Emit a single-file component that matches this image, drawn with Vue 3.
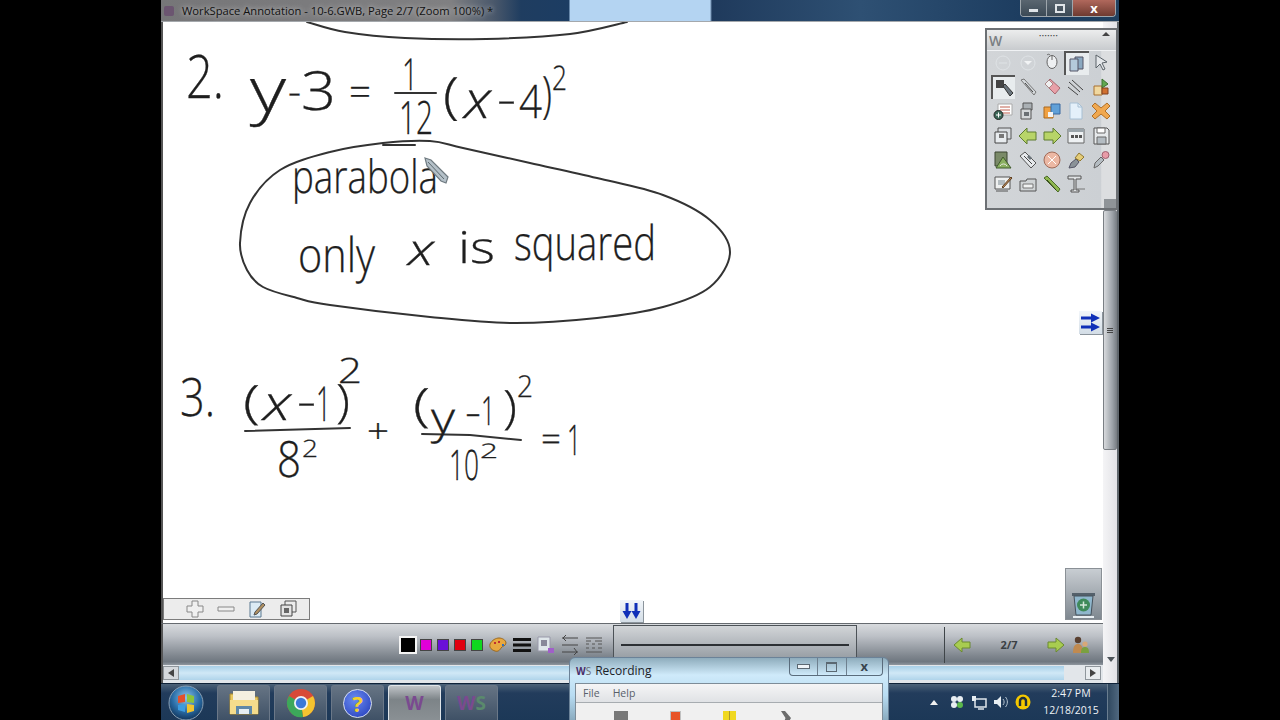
<template>
  <div class="screen">
    <div class="desktop">
      <div class="titlebar">
        <span class="title-icon"></span>
        <span class="title-text">WorkSpace Annotation - 10-6.GWB, Page 2/7  (Zoom 100%) *</span>
        <span class="title-glow"></span>
        <div class="win-btns">
          <span class="win-btn"><i class="glyph-min"></i></span>
          <span class="win-btn"><i class="glyph-max"></i></span>
          <span class="win-btn close">x</span>
        </div>
      </div>

      <div class="work">
        <div class="left-col">
          <div class="board">
            <svg class="ink" viewBox="161 22 942 601" width="942" height="601">
              <path v-for="(d, i) in inkPaths" :key="i" :d="d" class="stroke" />
              <text
                v-for="(t, i) in tokens"
                :key="'t' + i"
                :x="t.x"
                :y="t.y"
                :font-size="t.size"
                :textLength="t.w"
                :class="{ slant: t.slant }"
                lengthAdjust="spacingAndGlyphs"
                class="hand"
              >{{ t.t }}</text>
              <!-- pen cursor -->
              <path d="M425 158 L431 160 L448 177 L446 183 L441 181 L427 166 Z" fill="#b4c0c8" stroke="#6f7a80" stroke-width="1.2" />
              <path d="M428 162 L444 179" stroke="#5d6a70" stroke-width="1" fill="none" />
            </svg>

            <div class="page-strip">
              <svg v-for="(icon, i) in stripIcons" :key="i" viewBox="0 0 20 20" width="20" height="20">
                <path v-for="(p, j) in icon" :key="j" :d="p[0]" :fill="p[1]" :stroke="p[2]" />
              </svg>
            </div>

            <div class="arrow-tab down">
              <svg viewBox="0 0 23 22" width="23" height="22">
                <path d="M7 3v10M16 3v10" stroke="#1030b8" stroke-width="3" />
                <path d="M2.5 11h9L7 19zM11.5 11h9L16 19z" fill="#1030b8" />
              </svg>
            </div>

            <div class="arrow-tab right">
              <svg viewBox="0 0 23 23" width="23" height="23">
                <path d="M2 7h12M2 16h12" stroke="#1030b8" stroke-width="3" />
                <path d="M12 2.5l9 4.5-9 4.5zM12 11.5l9 4.5-9 4.5z" fill="#1030b8" />
              </svg>
            </div>

            <div class="trash">
              <svg viewBox="0 0 37 32" width="37" height="32">
                <path d="M7 4h23v3H7z" fill="#54606a" />
                <path d="M9 7h19l-2 19H11z" fill="#8fb6cc" stroke="#46525c" />
                <circle cx="18.5" cy="16" r="6.5" fill="#3f8a5a" />
                <path d="M15 16h7M18.5 12.5v7" stroke="#d4e6da" stroke-width="1.5" />
                <path d="M8 27h21v2H8z" fill="#e8eef2" />
              </svg>
            </div>
          </div>

          <div class="toolbar">
            <span class="swatch current"></span>
            <span v-for="c in swatches" :key="c" class="swatch" :style="{ background: c }"></span>
            <svg v-for="(icon, i) in penIcons" :key="i" class="tool-icon" viewBox="0 0 20 20" width="20" height="20">
              <path v-for="(p, j) in icon" :key="j" :d="p[0]" :fill="p[1]" :stroke="p[2]" />
            </svg>
            <div class="slider-panel"><span class="slider-line"></span></div>
            <span class="separator"></span>
            <svg class="nav-icon" viewBox="0 0 20 20" width="20" height="20">
              <path d="M2 10l8-7v4h8v6h-8v4z" fill="#a8cc50" stroke="#6a8a30" />
            </svg>
            <span class="page-no">2/7</span>
            <svg class="nav-icon" viewBox="0 0 20 20" width="20" height="20">
              <path d="M18 10l-8-7v4H2v6h8v4z" fill="#a8cc50" stroke="#6a8a30" />
            </svg>
            <svg class="nav-icon" viewBox="0 0 20 20" width="20" height="20">
              <circle cx="7" cy="5" r="3.2" fill="#5a4030" />
              <path d="M2 18c0-7 2-9 5-9s5 2 5 9z" fill="#c08a50" />
              <circle cx="14" cy="9" r="2.6" fill="#d8a878" />
              <path d="M10 18c0-4 1-6 4-6s4 2 4 6z" fill="#7aa040" />
            </svg>
          </div>

          <div class="hscroll">
            <span class="h-btn"><i class="tri-left"></i></span>
            <span class="h-thumb"></span>
            <span class="h-btn end"><i class="tri-right"></i></span>
          </div>
        </div>

        <div class="vscroll">
          <span class="v-up"></span>
          <span class="v-thumb"><i></i><i></i><i></i></span>
          <span class="v-track"></span>
          <span class="v-down"></span>
        </div>
      </div>

      <div class="taskbar">
        <div class="orb">
          <svg viewBox="0 0 36 36" width="36" height="36">
            <defs>
              <radialGradient id="orbFill" cx="50%" cy="35%" r="65%">
                <stop offset="0" stop-color="#8fc4e8" />
                <stop offset="0.6" stop-color="#2a6ea8" />
                <stop offset="1" stop-color="#12365c" />
              </radialGradient>
            </defs>
            <circle cx="18" cy="18" r="17" fill="url(#orbFill)" stroke="#8aa0b4" />
            <path d="M10 11l7-2v8l-7 1z" fill="#e4502c" />
            <path d="M19 9l7 2v7l-7-1z" fill="#8cc43c" />
            <path d="M10 20l7-1v8l-7-2z" fill="#3c9ce0" />
            <path d="M19 19l7 1v6l-7 2z" fill="#f0c430" />
          </svg>
        </div>
        <div class="task-btn">
          <svg viewBox="0 0 32 30" width="32" height="30">
            <path d="M2 6h12l3 3h13v17H2z" fill="#e8c860" stroke="#a88a30" />
            <path d="M5 3h22v9H5z" fill="#f4f0e0" />
            <path d="M2 12h28v14H2z" fill="#f4dc8c" />
            <path d="M8 18h16v8H8z" fill="#5e88a8" />
            <path d="M11 21h10v5H11z" fill="#e6eef2" />
          </svg>
        </div>
        <div class="task-btn">
          <svg viewBox="0 0 30 30" width="30" height="30">
            <circle cx="15" cy="15" r="14" fill="#d84a38" />
            <path d="M15 15L27 8a14 14 0 0 1-10 21z" fill="#f4c430" />
            <path d="M15 15l2 14A14 14 0 0 1 3 8z" fill="#3ca85a" />
            <circle cx="15" cy="15" r="7" fill="#eef2f6" />
            <circle cx="15" cy="15" r="5.2" fill="#3c78d8" />
          </svg>
        </div>
        <div class="task-btn">
          <span class="help-ball">?</span>
        </div>
        <div class="task-btn active"><span class="app-w">W</span></div>
        <div class="task-btn"><span class="app-w">W</span><span class="app-s">S</span></div>

        <div class="tray">
          <span class="tray-up"></span>
          <svg viewBox="0 0 16 16" width="16" height="16">
            <circle cx="5" cy="5" r="3" fill="#e8eef2" /><circle cx="11" cy="5" r="3" fill="#e8eef2" />
            <circle cx="5" cy="11" r="3" fill="#e8eef2" /><circle cx="11" cy="11" r="3" fill="#5cb84c" />
          </svg>
          <svg viewBox="0 0 16 16" width="16" height="16">
            <path d="M1 2h4v5H1z" fill="#e8eef2" />
            <path d="M4 5h11v8H4z" fill="none" stroke="#dfe6ec" stroke-width="1.5" />
            <path d="M7 15h6" stroke="#dfe6ec" stroke-width="1.5" />
          </svg>
          <svg viewBox="0 0 16 16" width="16" height="16">
            <path d="M1 6h3l4-4v12l-4-4H1z" fill="#e8eef2" />
            <path d="M10 5c1.5 2 1.5 4 0 6M12.5 3c2.5 3 2.5 7 0 10" stroke="#b8c6d2" fill="none" />
          </svg>
          <svg viewBox="0 0 16 16" width="16" height="16">
            <circle cx="8" cy="8" r="7.5" fill="#f4c800" />
            <path d="M5 12V7a3 3 0 0 1 6 0v5" stroke="#20303c" stroke-width="2.4" fill="none" />
          </svg>
          <div class="clock">
            <div>2:47 PM</div>
            <div>12/18/2015</div>
          </div>
          <span class="show-desktop"></span>
        </div>
      </div>

      <!-- floating tool palette -->
      <div class="palette">
        <div class="palette-head">
          <span class="palette-w">W</span>
          <span class="palette-dots">•••••••</span>
          <span class="palette-tri"></span>
        </div>
        <div class="palette-grid">
          <span
            v-for="(icon, i) in paletteIcons"
            :key="i"
            class="palette-cell"
            :class="{ selected: i === 3 || i === 5 }"
          >
            <svg viewBox="0 0 20 20" width="20" height="20">
              <path v-for="(p, j) in icon" :key="j" :d="p[0]" :fill="p[1]" :stroke="p[2]" />
            </svg>
          </span>
        </div>
        <span class="palette-handle"></span>
      </div>

      <!-- recording window -->
      <div class="rec-window">
        <div class="rec-title">
          <span class="rec-logo"><b>W</b>S</span>
          <span class="rec-name">Recording</span>
          <div class="rec-btns">
            <span><i class="rec-min"></i></span>
            <span><i class="rec-max"></i></span>
            <span class="rec-x">x</span>
          </div>
        </div>
        <div class="rec-body">
          <div class="rec-menu"><span>File</span><span>Help</span></div>
          <div class="rec-tools">
            <span class="rec-stop"></span>
            <span class="rec-record"></span>
            <span class="rec-pause"></span>
            <span class="rec-pointer"></span>
          </div>
        </div>
      </div>
    </div>
  </div>
</template>

<script setup>
// catmull-rom through hand picked points, the board strokes are wobbly
const smooth = (pts, closed = false) => {
  const n = pts.length
  const at = (i) => (closed ? pts[(i + n) % n] : pts[Math.max(0, Math.min(n - 1, i))])
  let d = `M${pts[0][0]} ${pts[0][1]}`
  const last = closed ? n : n - 1
  for (let i = 0; i < last; i++) {
    const [p0, p1, p2, p3] = [at(i - 1), at(i), at(i + 1), at(i + 2)]
    const c1 = [p1[0] + (p2[0] - p0[0]) / 6, p1[1] + (p2[1] - p0[1]) / 6]
    const c2 = [p2[0] - (p3[0] - p1[0]) / 6, p2[1] - (p3[1] - p1[1]) / 6]
    d += `C${c1[0]} ${c1[1]} ${c2[0]} ${c2[1]} ${p2[0]} ${p2[1]}`
  }
  return d
}

const inkPaths = [
  smooth([[307, 22], [345, 32], [405, 38], [486, 39], [570, 34], [627, 22]]),
  smooth(
    [[383, 143], [430, 141], [463, 148], [530, 163], [597, 178], [663, 195], [710, 220], [730, 252], [710, 287],
      [663, 307], [597, 318], [513, 323], [430, 317], [330, 305], [297, 298], [263, 287], [247, 270], [240, 243], [250, 203], [280, 170], [330, 152]],
    true
  ),
  'M383 145H415',
  'M395 93H436',
  'M245 431L350 428',
  'M422 434L470 435L521 440',
]

const tokens = [
  { t: '2.', x: 186, y: 98, w: 38, size: 60 },
  { t: 'y', x: 250, y: 112, w: 36, size: 62 },
  { t: '-', x: 288, y: 106, w: 13, size: 42 },
  { t: '3', x: 301, y: 110, w: 35, size: 54 },
  { t: '=', x: 349, y: 106, w: 22, size: 40 },
  { t: '1', x: 402, y: 90, w: 16, size: 44 },
  { t: '12', x: 399, y: 134, w: 34, size: 46 },
  { t: '(', x: 443, y: 113, w: 16, size: 50 },
  { t: 'x', x: 464, y: 118, w: 27, size: 52, slant: true },
  { t: '-', x: 497, y: 114, w: 19, size: 42 },
  { t: '4', x: 519, y: 118, w: 23, size: 46 },
  { t: ')', x: 542, y: 112, w: 10, size: 50 },
  { t: '2', x: 552, y: 90, w: 15, size: 34 },

  { t: 'parabola', x: 292, y: 193, w: 146, size: 46 },
  { t: 'only', x: 298, y: 272, w: 77, size: 48 },
  { t: 'x', x: 408, y: 265, w: 26, size: 44, slant: true },
  { t: 'is', x: 458, y: 263, w: 37, size: 44 },
  { t: 'squared', x: 514, y: 260, w: 142, size: 48 },

  { t: '3.', x: 180, y: 416, w: 35, size: 53 },
  { t: '(', x: 243, y: 418, w: 17, size: 46 },
  { t: 'x', x: 263, y: 420, w: 28, size: 48, slant: true },
  { t: '-', x: 297, y: 416, w: 19, size: 42 },
  { t: '1', x: 316, y: 421, w: 15, size: 48 },
  { t: ')', x: 336, y: 417, w: 14, size: 46 },
  { t: '2', x: 338, y: 383, w: 24, size: 35 },
  { t: '8', x: 277, y: 477, w: 24, size: 50 },
  { t: '2', x: 302, y: 457, w: 16, size: 24 },
  { t: '+', x: 367, y: 443, w: 22, size: 34 },
  { t: '(', x: 413, y: 421, w: 17, size: 46 },
  { t: 'y', x: 431, y: 433, w: 24, size: 44 },
  { t: '-', x: 465, y: 426, w: 16, size: 40 },
  { t: '1', x: 481, y: 425, w: 14, size: 40 },
  { t: ')', x: 503, y: 423, w: 14, size: 46 },
  { t: '2', x: 517, y: 397, w: 16, size: 30 },
  { t: '10', x: 449, y: 480, w: 30, size: 42 },
  { t: '2', x: 480, y: 458, w: 18, size: 20 },
  { t: '=', x: 541, y: 451, w: 20, size: 34 },
  { t: '1', x: 567, y: 455, w: 14, size: 42 },
]

const swatches = ['#e000d8', '#6a10d8', '#e00010', '#10d820']

const stripIcons = [
  [['M7 2h6v5h5v6h-5v5H7v-5H2V7h5z', '#f0f0f0', '#888']],
  [['M2 8h16v4H2z', '#f0f0f0', '#888']],
  [['M3 3h11v15H3z', '#dcebf4', '#5b7890'], ['M8 13l8-9 2 2-8 9-3 1z', '#b09060', '#555']],
  [['M7 2h11v11H7z', 'none', '#555'], ['M3 6h11v11H3z', '#e4e4e4', '#444'], ['M6 9h5v5H6z', '#666', 'none']],
]

const penIcons = [
  [['M2 9c2-4 6-6 9-6s7 2 7 5-4 3-5 5-3 4-6 3-6-3-5-7z', '#e8a840', '#9a6820'], ['M6 7h2v2H6zM10 6h2v2h-2z', '#c03030', 'none'], ['M14 9h2v2h-2z', '#3070c0', 'none']],
  [['M1 3h18v3H1zM1 8.5h18v3H1zM1 14h18v3H1z', '#111', 'none']],
  [['M2 2h12v14H2z', '#dfe6ea', '#99a'], ['M5 5h6v6H5z', '#889', 'none'], ['M12 13h6v5h-6z', '#a060c8', 'none']],
  [['M2 3h16M2 10h16M2 17h16', 'none', '#444'], ['M6 6L3 3l3-3M14 13l3 4-3 3', 'none', '#444']],
  [['M2 3h16M2 9h3M8 9h3M14 9h4M2 13h3M8 13h3M14 13h4M2 17h16M2 6h5M11 6h7', 'none', '#555']],
]

const paletteIcons = [
  [['M3 10a7 7 0 1 0 14 0a7 7 0 1 0-14 0M6 10h8', 'none', '#dfe3e6']],
  [['M3 10a7 7 0 1 0 14 0a7 7 0 1 0-14 0', 'none', '#dfe3e6'], ['M6 8h8l-4 4z', '#f2f4f5', 'none']],
  [['M5 9a5 6.5 0 1 0 10 0a5 6.5 0 1 0-10 0', '#eef0f2', '#666'], ['M10 2.5V7M8 2c-1-1-2-1-3 0', 'none', '#666']],
  [['M8 3h8v12H8z', '#8aa8c0', '#556'], ['M3 5h8v12H3z', '#b4cadb', '#556']],
  [['M5 2l11 7-5 1 3 6-2 1-3-6-4 4z', '#e4e7ea', '#5a6268']],

  [['M2 2h8v8H2z', '#444', 'none'], ['M9 8l2-2 8 9-3 3z', '#6c767e', '#333']],
  [['M3 3l3-1 12 13-2 3z', '#d6dadd', '#777'], ['M7 6l8 9', 'none', '#444']],
  [['M3 7l5-5 10 9-5 6z', '#e8a0a8', '#a86870'], ['M3 7l4-4 4 4-4 4z', '#f0f0f0', '#a88']],
  [['M3 5l11 10M6 3l11 10M2 10l10 8', 'none', '#444']],
  [['M3 9h8v9H3z', '#f0d8a0', '#a87030'], ['M11 2l6 5-6 4z', '#60a850', '#3c7030'], ['M11 11h6v6h-6z', '#d07030', '#804020']],

  [['M5 3h14v11H5z', '#fff', '#aaa'], ['M7 6h10M7 9h10M7 12h10', 'none', '#c06050'], ['M1 14a4.5 4.5 0 1 0 9 0a4.5 4.5 0 1 0-9 0', '#3c6858', '#222'], ['M3 14h5M5.5 11.5v5', 'none', '#fff']],
  [['M5 2h9v7H5z', '#aab0b4', '#555'], ['M3 8h10v10H3z', '#d4d8da', '#555'], ['M6 11h5v4H6z', '#6a7074', 'none']],
  [['M2 6h9v11H2z', '#f0a040', '#a86820'], ['M9 3h9v10H9z', '#60a0d8', '#3868a0'], ['M6 11h5v5H6z', '#f4f4f4', 'none']],
  [['M4 2h8l4 4v12H4z', '#e4f0fa', '#a8c0d4'], ['M12 2v4h4', 'none', '#a8c0d4']],
  [['M4 2l6 5 6-5 3 3-5 5 5 5-3 3-6-5-6 5-3-3 5-5-5-5z', '#f0a850', '#b07028']],

  [['M5 2h13v11H5z', '#d8dce0', '#555'], ['M2 6h12v11H2z', '#e8ecef', '#444'], ['M6 8h5v4H6z', '#777', 'none']],
  [['M1 10l8-8v4h9v8H9v4z', '#b8d468', '#5e7c30']],
  [['M19 10l-8-8v4H2v8h9v4z', '#b8d468', '#5e7c30']],
  [['M2 3h16v14H2z', '#eef1f3', '#666'], ['M2 3h16v3H2z', '#9aa4aa', 'none'], ['M5 9h3v3H5zM9 9h3v3H9zM13 9h3v3h-3z', '#555', 'none']],
  [['M3 2h13l2 2v14H3z', '#e6e9eb', '#555'], ['M6 2h8v5H6z', '#fff', '#666'], ['M6 11h9v7H6z', '#b4bcc2', '#666']],

  [['M2 2h12v14H2z', '#7a8a68', '#3a4430'], ['M3 18l7-11 8 11z', '#8ab060', '#3f5a2c'], ['M7 16a4 4 0 0 1 7 0', 'none', '#e8e8e0']],
  [['M2 6l5-4 11 11-5 5z', '#e6e9ec', '#555'], ['M6 6l8 8', 'none', '#444'], ['M9 7l2-2 3 3-2 2z', '#6a7278', 'none']],
  [['M2 10a8 8 0 1 0 16 0a8 8 0 1 0-16 0', '#ecb8a4', '#a06a58'], ['M6 6l8 8M14 6l-8 8', 'none', '#fff']],
  [['M3 18l2-5 5-4 3 3-4 5z', '#8a9298', '#556'], ['M9 8l4-5 5 4-4 4z', '#e4cc78', '#907830']],
  [['M3 18l1-5 6-6 3 3-6 6z', '#b4bcc2', '#666'], ['M11 5a3.5 3.5 0 1 0 7 0a3.5 3.5 0 1 0-7 0', '#e89ca8', '#a06070']],

  [['M2 3h15v12H2z', '#eef0f0', '#555'], ['M5 6h7v5H5z', '#b4bcc0', 'none'], ['M9 13L18 3l1 1-9 10z', '#c09060', '#604020'], ['M3 17h12', 'none', '#555']],
  [['M2 7h6l1-2h9v12H2z', '#d0d4d6', '#555'], ['M5 10h10v4H5z', '#f0f2f2', '#777']],
  [['M2 4l3-2 13 13-2 3z', '#90b850', '#4a6a28'], ['M5 6l9 10', 'none', '#2a3a18']],
  [['M2 2h13v3h-5v11h3v2H5v-2h3V5H2z', '#dfe2e4', '#555'], ['M10 15h9', 'none', '#777']],
]
</script>

<style>
html,
body {
  margin: 0;
  background: #000;
}
</style>

<style scoped>
.screen {
  width: 1280px;
  height: 720px;
  background: #000;
  display: flex;
  padding-left: 161px;
  box-sizing: border-box;
  overflow: hidden;
  font-family: "Open Sans", "Liberation Sans", sans-serif;
}

.desktop {
  position: relative;
  width: 958px;
  height: 720px;
  display: flex;
  flex-direction: column;
  overflow: hidden;
  background: #24405f;
}

/* title bar */
.titlebar {
  position: relative;
  height: 22px;
  flex: none;
  display: flex;
  align-items: center;
  background: linear-gradient(90deg, #767678 0, #808082 290px, #47566a 335px, #1f3d60 360px, #1c3d63 408px, #b4d4f2 409px, #b4d4f2 549px, #1f3a5c 551px, #2e5073 700px, #1d3d60 860px, #20405f 100%);
  border-bottom: 1px solid #a4a8ac;
  box-sizing: border-box;
}

.title-icon {
  width: 10px;
  height: 10px;
  margin-left: 3px;
  background: #6b5570;
  border-radius: 2px;
}

.title-text {
  margin-left: 8px;
  font-size: 11.2px;
  font-family: "Open Sans", sans-serif;
  color: #111;
  white-space: pre;
  text-shadow: 0 0 5px #ddd;
}

.title-glow {
  flex: 1;
}

.win-btns {
  display: flex;
  height: 16px;
  align-self: flex-start;
  margin-right: 3px;
  border: 1px solid #9ea6ac;
  border-top: none;
  border-radius: 0 0 4px 4px;
  overflow: hidden;
}

.win-btn {
  width: 25px;
  display: flex;
  align-items: center;
  justify-content: center;
  background: linear-gradient(#5a6670, #3c4a56);
  border-right: 1px solid #9ea6ac;
  color: #fff;
  font-size: 13px;
  font-weight: 700;
  line-height: 1;
}

.win-btn.close {
  width: 42px;
  border-right: none;
  background: linear-gradient(#b0685c, #6e3a30);
}

.glyph-min {
  width: 9px;
  height: 3px;
  margin-top: 4px;
  background: #dfe4e8;
}

.glyph-max {
  width: 6px;
  height: 5px;
  border: 2px solid #dfe4e8;
}

/* main */
.work {
  display: flex;
  height: 661px;
  flex: none;
  border-right: 2px solid #5f666c;
}

.left-col {
  width: 942px;
  display: flex;
  flex-direction: column;
}

.board {
  position: relative;
  height: 601px;
  flex: none;
  background: #fff;
  box-shadow: inset 2px 0 0 #555;
}

.ink {
  position: absolute;
  inset: 0;
  display: block;
}

.stroke {
  fill: none;
  stroke: #333;
  stroke-width: 2;
  stroke-linecap: round;
}

.hand {
  font-family: "Open Sans", sans-serif;
  font-weight: 300;
  fill: #1e1e1e;
  stroke: #1e1e1e;
  stroke-width: 0.3px;
  text-rendering: geometricPrecision;
}

.slant {
  font-style: italic;
}

.page-strip {
  position: absolute;
  left: 2px;
  top: 576px;
  width: 147px;
  height: 22px;
  box-sizing: border-box;
  padding-left: 21px;
  display: flex;
  align-items: center;
  gap: 11px;
  background: #ececec;
  border: 1px solid #7c7c7c;
}

.arrow-tab {
  position: absolute;
  background: linear-gradient(#f2f6fa, #d3dde6);
  box-shadow: 1px 1px 0 #8b949c;
  display: flex;
}

.arrow-tab.down {
  left: 459px;
  top: 578px;
}

.arrow-tab.right {
  left: 918px;
  top: 289px;
}

.trash {
  position: absolute;
  left: 904px;
  top: 546px;
  width: 37px;
  height: 52px;
  box-sizing: border-box;
  padding-top: 20px;
  background: linear-gradient(#c8cdd2, #7f8890);
  border: 1px solid #8a9096;
}

.trash svg {
  display: block;
  margin-left: -1px;
}

/* bottom toolbar */
.toolbar {
  height: 42px;
  flex: none;
  display: flex;
  align-items: center;
  box-sizing: border-box;
  padding-left: 238px;
  border-top: 1px solid #666b70;
  background: linear-gradient(#d8dbde, #bcc0c6 30%, #7f868e 78%, #6f7780 92%, #8f979f);
  box-shadow: inset 2px 0 0 #555;
}

.swatch {
  width: 12px;
  height: 12px;
  margin-right: 5px;
  border: 1px solid #444;
  box-sizing: border-box;
}

.swatch.current {
  margin-right: 3px;
  background: #000;
  border: 2px solid #f4f4f4;
  box-sizing: content-box;
  width: 14px;
  height: 14px;
}

.tool-icon {
  margin-right: 4px;
  flex: none;
}

.slider-panel {
  width: 244px;
  height: 38px;
  margin-left: 5px;
  align-self: flex-start;
  margin-top: 1px;
  box-sizing: border-box;
  padding: 0 7px;
  display: flex;
  align-items: center;
  border: 1px solid #4c5257;
  border-bottom: none;
  background: linear-gradient(#d2d5d8, #8f969d);
}

.slider-line {
  flex: 1;
  height: 2px;
  background: #2c3034;
}

.separator {
  width: 1px;
  height: 36px;
  margin-left: 87px;
  background: #3f4549;
}

.nav-icon {
  flex: none;
}

.toolbar .separator + .nav-icon {
  margin-left: 7px;
}

.page-no {
  width: 74px;
  text-align: center;
  font-size: 11px;
  font-weight: 700;
  color: #3a3f44;
}

.nav-icon + .nav-icon {
  margin-left: 5px;
}

/* horizontal scrollbar */
.hscroll {
  height: 18px;
  flex: none;
  display: flex;
  align-items: stretch;
  background: #e2e6ea;
  box-shadow: inset 2px 0 0 #555;
  padding: 1px 2px 3px;
  box-sizing: border-box;
}

.h-btn {
  width: 16px;
  display: flex;
  align-items: center;
  justify-content: center;
  background: #d4d8dc;
  border: 1px solid #8f969c;
  box-sizing: border-box;
}

.h-btn.end {
  margin-left: 21px;
  background: #e8ecef;
}

.h-thumb {
  width: 886px;
  background: linear-gradient(#a8d0e8, #d0e8f6 50%, #b0d4ea);
}

.tri-left,
.tri-right {
  width: 0;
  height: 0;
  border-top: 4px solid transparent;
  border-bottom: 4px solid transparent;
}

.tri-left {
  border-right: 6px solid #444;
}

.tri-right {
  border-left: 6px solid #444;
}

/* vertical scrollbar */
.vscroll {
  width: 14px;
  display: flex;
  flex-direction: column;
  background: linear-gradient(90deg, #f4f4f6, #e2e2e6);
}

.v-up {
  height: 188px;
}

.v-thumb {
  height: 240px;
  box-sizing: border-box;
  display: flex;
  flex-direction: column;
  justify-content: center;
  align-items: center;
  gap: 1px;
  background: linear-gradient(90deg, #d8dadd, #9ca2a8 70%, #7e848a);
  border: 1px solid #7a7f84;
  border-radius: 2px;
}

.v-thumb i {
  width: 6px;
  height: 1px;
  background: #444;
}

.v-track {
  flex: 1;
}

.v-down {
  height: 26px;
  position: relative;
}

.v-down::before {
  content: "";
  position: absolute;
  left: 4px;
  top: 0;
  border-left: 4px solid transparent;
  border-right: 4px solid transparent;
  border-top: 5px solid #4c5358;
}

/* taskbar */
.taskbar {
  flex: 1;
  display: flex;
  align-items: stretch;
  gap: 4px;
  padding-left: 56px;
  position: relative;
  background: linear-gradient(#4c6278, #223c5c 25%, #1c3857);
  border-top: 1px solid #0f2238;
}

.orb {
  position: absolute;
  left: 7px;
  top: 1px;
}

.task-btn {
  width: 53px;
  margin-top: 1px;
  box-sizing: border-box;
  display: flex;
  align-items: center;
  justify-content: center;
  border: 1px solid #6b7888;
  border-bottom: none;
  border-radius: 3px 3px 0 0;
  background: linear-gradient(#667484, #3f5166);
}

.task-btn.active {
  border-color: #dfe4e8;
  background: linear-gradient(#c0c4c8, #7d8488 40%, #8a9094);
}

.help-ball {
  width: 29px;
  height: 29px;
  border-radius: 50%;
  background: radial-gradient(circle at 40% 35%, #6a8cf0, #2038b8);
  border: 1px solid #d8e0f0;
  box-sizing: border-box;
  text-align: center;
  color: #f4d028;
  font-size: 22px;
  font-weight: 700;
  line-height: 27px;
}

.app-w,
.app-s {
  font-size: 19px;
  font-weight: 700;
  color: #7a4a90;
}

.app-s {
  color: #5a8a6c;
}

.tray {
  position: absolute;
  right: 0;
  top: 0;
  bottom: 0;
  display: flex;
  align-items: center;
  gap: 6px;
}

.tray-up {
  width: 0;
  height: 0;
  margin-right: 5px;
  border-left: 4px solid transparent;
  border-right: 4px solid transparent;
  border-bottom: 5px solid #f0f0f0;
}

.clock {
  margin-left: 6px;
  margin-right: 2px;
  text-align: center;
  font-size: 10.5px;
  line-height: 17px;
  color: #eef2f6;
  width: 56px;
}

.show-desktop {
  width: 11px;
  align-self: stretch;
  background: linear-gradient(90deg, #30485f, #50687f);
  border-left: 1px solid #6a7e90;
}

/* floating palette */
.palette {
  position: absolute;
  left: 824px;
  top: 28px;
  width: 133px;
  height: 182px;
  box-sizing: border-box;
  border: 2px solid #6c7074;
  background: linear-gradient(90deg, #d2d5d8 0, #ccd0d4 88%, #dcdee0 89%);
}

.palette-head {
  height: 20px;
  position: relative;
  border-bottom: 1px solid #f0f2f4;
  background: linear-gradient(#eceded, #c8cbce);
}

.palette-w {
  position: absolute;
  left: 2px;
  top: 1px;
  font-size: 14px;
  font-weight: 600;
  color: #7a7e82;
}

.palette-dots {
  position: absolute;
  left: 52px;
  top: 2px;
  font-size: 6px;
  letter-spacing: 0.5px;
  color: #444;
}

.palette-tri {
  position: absolute;
  right: 6px;
  top: 2px;
  border-left: 4px solid transparent;
  border-right: 4px solid transparent;
  border-bottom: 4px solid #444;
}

.palette-grid {
  padding-left: 4px;
  display: grid;
  grid-template-columns: repeat(5, 24.4px);
  grid-auto-rows: 24.2px;
}

.palette-cell {
  display: flex;
  align-items: center;
  justify-content: center;
}

.palette-cell.selected {
  background: #e8ecee;
  border-top: 2px solid #555;
  border-left: 2px solid #555;
  box-sizing: border-box;
}

.palette-handle {
  position: absolute;
  right: 0;
  bottom: 0;
  width: 12px;
  height: 9px;
  background: #8f9498;
}

/* recording window */
.rec-window {
  position: absolute;
  left: 408px;
  top: 657px;
  width: 320px;
  height: 70px;
  box-sizing: border-box;
  padding: 0 5px;
  border: 1px solid #6b8298;
  border-radius: 6px 6px 0 0;
  background: linear-gradient(#8eacbc, #cfeafa 25%, #b8dcf2 55%, #7fa0b4);
}

.rec-title {
  height: 25px;
  display: flex;
  align-items: center;
  position: relative;
}

.rec-logo {
  margin-left: 1px;
  font-size: 10px;
  color: #6c6c70;
}

.rec-logo b {
  color: #4a2f6a;
}

.rec-name {
  margin-left: 4px;
  font-size: 12px;
  font-family: "Open Sans", sans-serif;
  color: #1c2228;
}

.rec-btns {
  position: absolute;
  right: 0;
  top: 0;
  width: 94px;
  height: 18px;
  display: flex;
  box-sizing: border-box;
  border: 1px solid #5a6c7c;
  border-top: none;
  border-radius: 0 0 4px 4px;
}

.rec-btns span {
  flex: 1;
  display: flex;
  align-items: center;
  justify-content: center;
  border-right: 1px solid #6e808f;
}

.rec-btns .rec-x {
  flex: 1.3;
  border-right: none;
  font-size: 13px;
  font-weight: 700;
  color: #39454f;
  line-height: 1;
}

.rec-min {
  width: 11px;
  height: 3px;
  border: 1px solid #5b6872;
  background: #eef4f8;
}

.rec-max {
  width: 9px;
  height: 7px;
  border: 1px solid #5b6872;
  border-top-width: 2px;
}

.rec-body {
  border: 1px solid #7d8c98;
  background: #f0f0f0;
}

.rec-menu {
  height: 18px;
  display: flex;
  align-items: center;
  gap: 13px;
  padding-left: 7px;
  font-size: 10.5px;
  color: #58606a;
  background: linear-gradient(#f5f5f6, #e0e2e5);
  border-bottom: 1px solid #a7acb0;
}

.rec-tools {
  height: 30px;
  position: relative;
  display: flex;
  padding: 8px 0 0 38px;
  gap: 42px;
  box-sizing: border-box;
}

.rec-stop {
  width: 14px;
  height: 14px;
  background: #787878;
}

.rec-record {
  width: 11px;
  height: 14px;
  background: #e85428;
  border: 1px solid #c0c0c0;
  box-sizing: border-box;
}

.rec-pause {
  width: 13px;
  height: 14px;
  background: linear-gradient(90deg, #f0d820 45%, #a89830 45%, #a89830 55%, #f0d820 55%);
}

.rec-pointer {
  width: 10px;
  height: 14px;
  margin-left: 3px;
  background: #6c6c6c;
  clip-path: polygon(0 0, 40% 0, 100% 50%, 60% 100%, 20% 100%, 45% 50%);
}
</style>
